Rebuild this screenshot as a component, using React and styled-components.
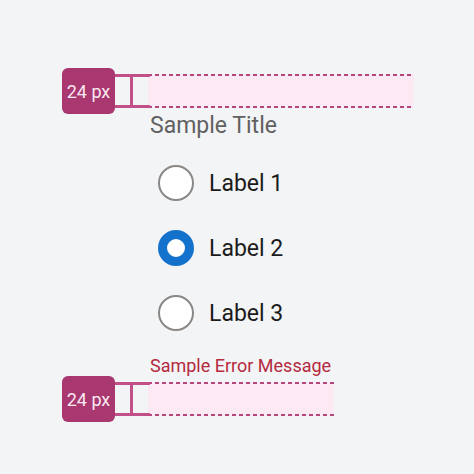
import React from 'react';
import styled, { createGlobalStyle } from 'styled-components';

const GlobalStyle = createGlobalStyle`
  html, body {
    margin: 0;
    padding: 0;
    background: #f3f4f6;
    font-family: Roboto, "Noto Sans", "Liberation Sans", sans-serif;
  }
`;

const Page = styled.div`
  width: 474px;
  height: 474px;
  box-sizing: border-box;
  padding: 68px 0 0 62px;
  display: flex;
  flex-direction: column;
`;

const Marker = styled.div`
  display: flex;
  align-items: center;
  margin-top: ${({ top }) => top || 0}px;
`;

const Badge = styled.div`
  width: 53px;
  height: 46px;
  border-radius: 6px;
  background: #a8386f;
  color: #fbe8f1;
  font-size: 18px;
  display: flex;
  align-items: center;
  justify-content: center;
`;

const Bracket = styled.div`
  position: relative;
  width: 35px;
  height: 34px;
  box-sizing: border-box;
  border-top: 3px solid #c24f88;
  border-bottom: 3px solid #c24f88;

  &::before {
    content: '';
    position: absolute;
    left: 15px;
    top: 0;
    bottom: 0;
    width: 3px;
    background: #c24f88;
  }
`;

const Band = styled.div`
  width: ${({ width }) => width}px;
  height: 34px;
  margin-left: -2px;
  background-color: #fde9f3;
  background-image:
    repeating-linear-gradient(90deg, #b5477d 0 4px, transparent 4px 7px),
    repeating-linear-gradient(90deg, #b5477d 0 4px, transparent 4px 7px);
  background-size: 100% 2px, 100% 2px;
  background-position: 0 0, 0 100%;
  background-repeat: no-repeat;
`;

const Content = styled.div`
  padding-left: 88px;
  display: flex;
  flex-direction: column;
`;

const Title = styled.div`
  margin-top: -2px;
  font-size: 23px;
  line-height: 28px;
  color: #616161;
`;

const Group = styled.div`
  margin-top: 25px;
  padding-left: 8px;
  display: flex;
  flex-direction: column;
  gap: 29px;
`;

const Option = styled.label`
  display: flex;
  align-items: center;
  gap: 15px;
  height: 36px;
  font-size: 23px;
  color: #1b1b1b;
`;

const Circle = styled.span`
  width: 36px;
  height: 36px;
  box-sizing: border-box;
  border-radius: 50%;
  background: #ffffff;
  border: ${({ checked }) => (checked ? '9px solid #1572cc' : '2px solid #8a8886')};
`;

const Error = styled.div`
  margin-top: 24px;
  font-size: 18px;
  line-height: 22px;
  color: #b52a3f;
`;

const SpacingMarker = ({ width, top }) => (
  <Marker top={top}>
    <Badge>24 px</Badge>
    <Bracket />
    <Band width={width} />
  </Marker>
);

const options = ['Label 1', 'Label 2', 'Label 3'];

export default function App() {
  return (
    <>
      <GlobalStyle />
      <Page>
        <SpacingMarker width={266} />
        <Content>
          <Title>Sample Title</Title>
          <Group role="radiogroup">
            {options.map((label, i) => (
              <Option key={label}>
                <Circle checked={i === 1} />
                {label}
              </Option>
            ))}
          </Group>
          <Error>Sample Error Message</Error>
        </Content>
        <SpacingMarker width={186} top={-1} />
      </Page>
    </>
  );
}
